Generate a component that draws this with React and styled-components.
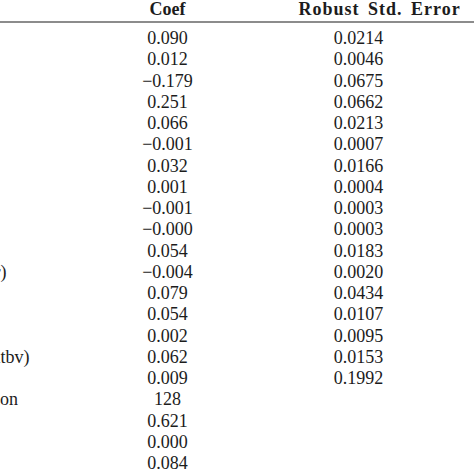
import React from "react";
import styled, { createGlobalStyle } from "styled-components";

const Global = createGlobalStyle`
  html, body { margin: 0; padding: 0; background: #ffffff; }
  body { overflow: hidden; }
`;

const Page = styled.div`
  width: 474px;
  height: 474px;
  overflow: hidden;
  background: #ffffff;
  font-family: "Liberation Serif", "Times New Roman", serif;
  font-size: 18px;
  color: #1c1c1c;
`;

const Table = styled.div`
  margin-left: -116.5px;
  margin-top: -1px;
  width: 600px;
`;

const Row = styled.div`
  display: grid;
  grid-template-columns: 224px 120px 71px 120px;
  height: ${(p) => (p.$head ? "21px" : "21.25px")};
  line-height: ${(p) => (p.$head ? "21px" : "21.25px")};
  font-weight: ${(p) => (p.$head ? 700 : 400)};
  white-space: nowrap;
`;

const Rule = styled.div`
  margin: 1px 0 5px 0;
  height: 2px;
  width: 600px;
  background: #8c8c8c;
`;

const Label = styled.div`
  text-align: left;
`;

const Cell = styled.div`
  text-align: center;
  grid-column: ${(p) => p.$col};
  letter-spacing: ${(p) => p.$track || "normal"};
  word-spacing: ${(p) => (p.$track ? "3px" : "normal")};
`;

const rows = [
  ["Intercept", "0.090", "0.0214"],
  ["Firm size", "0.012", "0.0046"],
  ["Leverage", "\u22120.179", "0.0675"],
  ["Tangibility", "0.251", "0.0662"],
  ["Profitability", "0.066", "0.0213"],
  ["Age", "\u22120.001", "0.0007"],
  ["Liquidity", "0.032", "0.0166"],
  ["Growth", "0.001", "0.0004"],
  ["Dividend", "\u22120.001", "0.0003"],
  ["Risk", "\u22120.000", "0.0003"],
  ["Cash", "0.054", "0.0183"],
  ["Current ratio (cr)", "\u22120.004", "0.0020"],
  ["Inflation", "0.079", "0.0434"],
  ["GDP growth", "0.054", "0.0107"],
  ["Interest", "0.002", "0.0095"],
  ["Market price (mtbv)", "0.062", "0.0153"],
  ["Constant", "0.009", "0.1992"],
  ["No. of observation", "128", ""],
  ["R-squared", "0.621", ""],
  ["Prob > F", "0.000", ""],
  ["Root MSE", "0.084", ""],
];

export default function App() {
  return (
    <Page>
      <Global />
      <Table>
        <Row $head>
          <Label>Variable</Label>
          <Cell $col={2}>Coef</Cell>
          <Cell $col={4} $track="1px">Robust Std. Error</Cell>
        </Row>
        <Rule />
        {rows.map(([label, coef, se], i) => (
          <Row key={i}>
            <Label>{label}</Label>
            <Cell $col={2}>{coef}</Cell>
            <Cell $col={4}>{se}</Cell>
          </Row>
        ))}
      </Table>
    </Page>
  );
}
